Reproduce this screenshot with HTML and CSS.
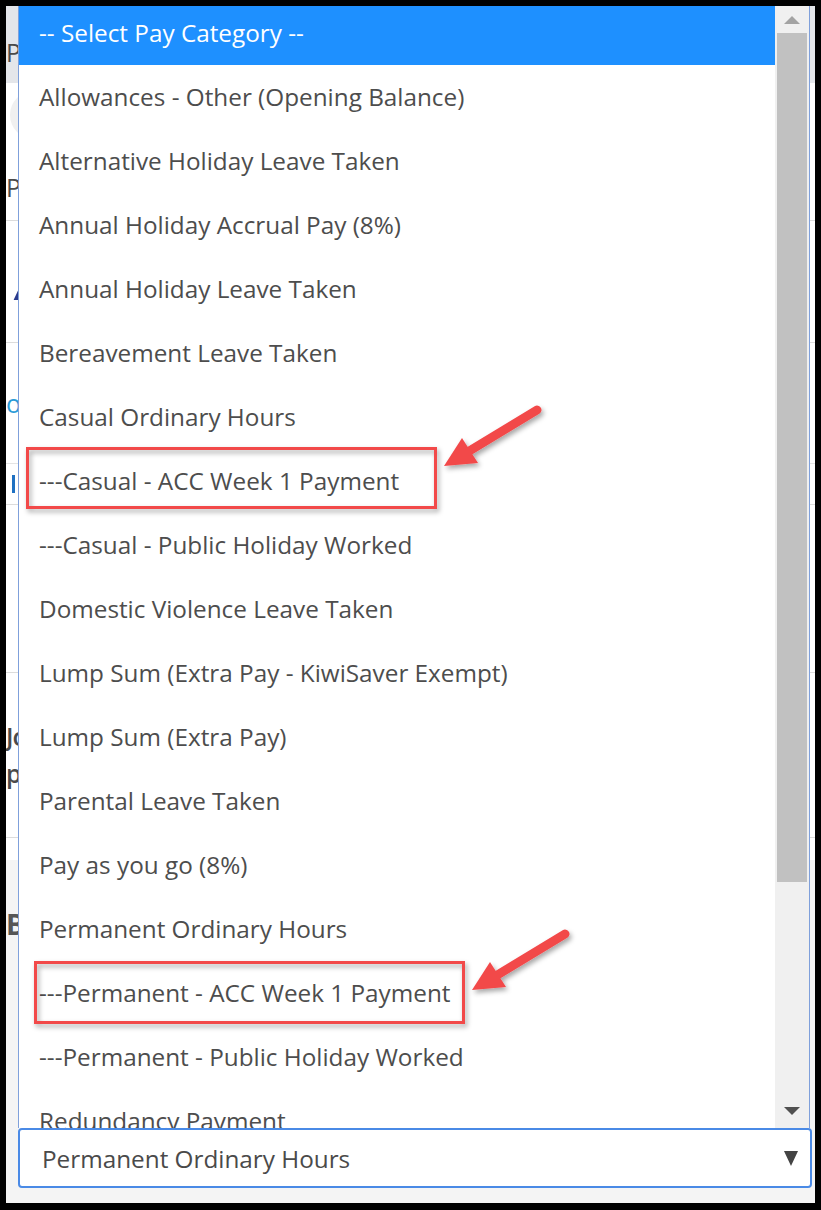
FILE: index.html
```html
<!DOCTYPE html>
<html>
<head>
<meta charset="utf-8">
<link rel="stylesheet" href="styles.css">
</head>
<body>
<div class="frame">
  <div class="page">
    <div class="band band-top"><span class="frag">Pa</span></div>
    <div class="band band-profile"><span class="avatar"></span><span class="frag frag-low">Pa</span></div>
    <div class="band band-check"><span class="check"></span></div>
    <div class="band band-link"><span class="frag blue">o</span></div>
    <div class="band band-bar"><span class="bar-frag"></span></div>
    <div class="band band-empty"></div>
    <div class="band band-job"><span class="frag stack">Jo<br>pg</span></div>
    <div class="band band-white"></div>
    <div class="band band-grey"><span class="frag bold">B</span></div>
  </div>

  <div class="dropdown">
    <div class="options">
      <div class="opt selected">-- Select Pay Category --</div>
      <div class="opt">Allowances - Other (Opening Balance)</div>
      <div class="opt">Alternative Holiday Leave Taken</div>
      <div class="opt">Annual Holiday Accrual Pay (8%)</div>
      <div class="opt">Annual Holiday Leave Taken</div>
      <div class="opt">Bereavement Leave Taken</div>
      <div class="opt">Casual Ordinary Hours</div>
      <div class="opt">---Casual - ACC Week 1 Payment</div>
      <div class="opt">---Casual - Public Holiday Worked</div>
      <div class="opt">Domestic Violence Leave Taken</div>
      <div class="opt">Lump Sum (Extra Pay - KiwiSaver Exempt)</div>
      <div class="opt">Lump Sum (Extra Pay)</div>
      <div class="opt">Parental Leave Taken</div>
      <div class="opt">Pay as you go (8%)</div>
      <div class="opt">Permanent Ordinary Hours</div>
      <div class="opt">---Permanent - ACC Week 1 Payment</div>
      <div class="opt">---Permanent - Public Holiday Worked</div>
      <div class="opt">Redundancy Payment</div>
    </div>
    <div class="scrollbar">
      <div class="sb-btn"><span class="tri-up"></span></div>
      <div class="sb-track"><div class="sb-thumb"></div></div>
      <div class="sb-btn sb-btn-down"><span class="tri-down"></span></div>
    </div>
  </div>

  <div class="select">
    <span class="select-value">Permanent Ordinary Hours</span>
    <span class="select-arrow"></span>
  </div>
</div>

<svg class="annotations" width="821" height="1210" viewBox="0 0 821 1210">
  <defs>
    <filter id="shadow" x="-20%" y="-20%" width="140%" height="140%">
      <feDropShadow dx="2" dy="3" stdDeviation="2.5" flood-color="#000" flood-opacity="0.35"/>
    </filter>
    <g id="arrow">
      <line x1="537" y1="410" x2="466" y2="453" stroke="#f2484a" stroke-width="9" stroke-linecap="round"/>
      <polygon points="444,466 462,438 478,463" fill="#f2484a"/>
    </g>
  </defs>
  <g filter="url(#shadow)">
    <rect x="27.5" y="448.5" width="408" height="59" fill="none" stroke="#f2484a" stroke-width="3"/>
    <rect x="35.5" y="962.5" width="428" height="60" fill="none" stroke="#f2484a" stroke-width="3"/>
    <use href="#arrow"/>
    <use href="#arrow" transform="translate(28 524)"/>
  </g>
</svg>
</body>
</html>
```

FILE: styles.css
```css
html, body {
  margin: 0;
  padding: 0;
  background: #000;
}

body {
  width: 821px;
  height: 1210px;
  position: relative;
  overflow: hidden;
  font-family: "Open Sans", "Liberation Sans", sans-serif;
}

.frame {
  position: relative;
  margin: 6px 6px 0 6px;
  width: 809px;
  height: 1197px;
  overflow: hidden;
  background: #fff;
}

/* background page peeking out at the edges */
.page {
  display: flex;
  flex-direction: column;
  height: 100%;
  color: #4a4a4a;
  font-size: 25px;
}

.band {
  position: relative;
  display: flex;
  align-items: center;
  padding-left: 0;
  box-sizing: border-box;
}

.band-top { height: 77px; background: #e4e6ea; align-items: flex-end; padding-bottom: 18px; }
.band-profile { height: 138px; border-bottom: 1px solid #dcdcdc; flex-direction: column; align-items: flex-start; justify-content: space-between; padding: 8px 0 20px 0; }
.band-check { height: 122px; border-bottom: 1px solid #dcdcdc; }
.band-link { height: 120px; }
.band-bar { height: 42px; border-top: 1px solid #e4e4e4; border-bottom: 1px solid #dcdcdc; }
.band-empty { height: 168px; border-bottom: 1px solid #dcdcdc; }
.band-job { height: 165px; border-bottom: 1px solid #dcdcdc; }
.band-white { height: 22px; }
.band-grey { flex: 1; background: #f4f4f4; align-items: flex-start; padding-top: 50px; }

.frag { line-height: 1; letter-spacing: -1px; }
.blue { color: #2a9bd8; }
.stack { font-weight: 600; line-height: 1.5; color: #4a4a4a; }
.bold { font-weight: 700; color: #555; font-size: 28px; }

.avatar {
  width: 48px;
  height: 48px;
  border-radius: 50%;
  background: #f0f0f0;
  margin-left: 4px;
}

.check {
  width: 10px;
  height: 36px;
  margin-left: 6px;
  border-right: 5px solid #2b3a8c;
  transform: skewX(-25deg);
}

.bar-frag {
  width: 3px;
  height: 18px;
  background: #1e70c2;
  margin-left: 6px;
}

/* dropdown list overlay */
.dropdown {
  position: absolute;
  left: 12px;
  top: 0;
  width: 792px;
  height: 1122px;
  display: flex;
  background: #fff;
  border-left: 1px solid #7fa0db;
  border-right: 1px solid #7fa0db;
  box-sizing: border-box;
}

.options {
  flex: 1;
  overflow: hidden;
  display: flex;
  flex-direction: column;
}

.opt {
  flex: none;
  height: 64px;
  line-height: 64px;
  padding-left: 20px;
  font-size: 24.3px;
  color: #4d4d4d;
  white-space: nowrap;
}

.opt.selected {
  margin-top: -5px;
  background: #1e90ff;
  color: #fff;
}

.scrollbar {
  width: 34px;
  flex: none;
  background: #f0f0f0;
  display: flex;
  flex-direction: column;
}

.sb-btn {
  height: 27px;
  display: flex;
  align-items: center;
  justify-content: center;
  flex: none;
}

.sb-btn-down {
  height: 30px;
  align-items: flex-start;
}

.tri-up {
  width: 0;
  height: 0;
  border-left: 8px solid transparent;
  border-right: 8px solid transparent;
  border-bottom: 8px solid #a3a3a3;
}

.tri-down {
  width: 0;
  height: 0;
  border-left: 8px solid transparent;
  border-right: 8px solid transparent;
  border-top: 8px solid #505050;
  margin-top: 9px;
}

.sb-track {
  flex: 1;
  padding: 0 2px;
}

.sb-thumb {
  height: 849px;
  background: #c1c1c1;
}

/* the select control */
.select {
  position: absolute;
  left: 12px;
  top: 1122px;
  width: 794px;
  height: 60px;
  box-sizing: border-box;
  border: 2px solid #4a8ae6;
  border-radius: 4px;
  background: #fff;
  display: flex;
  align-items: center;
  justify-content: space-between;
  padding: 0 10px 0 22px;
}

.select-value {
  font-size: 24.3px;
  color: #4a4a4a;
}

.select-arrow {
  width: 0;
  height: 0;
  border-left: 7px solid transparent;
  border-right: 7px solid transparent;
  border-top: 15px solid #444;
  margin-right: 2px;
}

.annotations {
  position: absolute;
  left: 0;
  top: 0;
  pointer-events: none;
}
```
